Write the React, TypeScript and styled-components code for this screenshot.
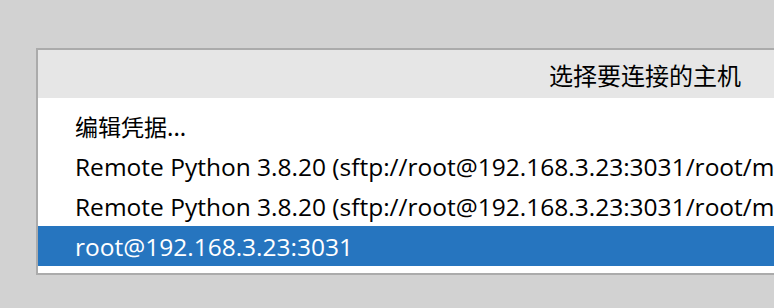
import React from 'react'
import styled, { createGlobalStyle } from 'styled-components'

const GlobalStyle = createGlobalStyle`
  html, body {
    margin: 0;
    padding: 0;
    background: #d2d2d2;
    overflow: hidden;
  }
  body {
    font-family: "Open Sans", "Noto Sans CJK SC", sans-serif;
  }
`

const Page = styled.main`
  width: 774px;
  height: 308px;
  padding: 48px 0 0 36px;
  box-sizing: border-box;
  overflow: hidden;
`

const Panel = styled.section`
  width: 1218px;
  border: 2px solid #ababab;
  background: #ffffff;
  box-sizing: border-box;
`

const Header = styled.header`
  height: 48px;
  background: #e6e6e6;
  display: flex;
  align-items: center;
  justify-content: center;
  font-family: "Noto Sans CJK SC", sans-serif;
  font-size: 24px;
  color: #000;
`

const List = styled.ul`
  list-style: none;
  margin: 0;
  padding: 8px 0 7px;
`

const Item = styled.li<{ $selected?: boolean }>`
  height: 40px;
  display: flex;
  align-items: center;
  padding-left: 37px;
  white-space: nowrap;
  font-size: 24.5px;
  color: ${p => (p.$selected ? '#ffffff' : '#000000')};
  background: ${p => (p.$selected ? '#2675bf' : 'transparent')};
`

const CjkText = styled.span`
  font-family: "Noto Sans CJK SC", sans-serif;
  font-size: 23px;
`

const hosts: Array<string> = [
  'Remote Python 3.8.20 (sftp://root@192.168.3.23:3031/root/miniconda3/bin/python)',
  'Remote Python 3.8.20 (sftp://root@192.168.3.23:3031/root/miniconda3/envs/py38/bin/python)',
  'root@192.168.3.23:3031',
]

const App = () => {
  return (
    <Page>
      <GlobalStyle />
      <Panel>
        <Header>选择要连接的主机</Header>
        <List>
          <Item>
            <CjkText>编辑凭据...</CjkText>
          </Item>
          {hosts.map((h, i) => (
            <Item key={i} $selected={i === hosts.length - 1}>
              {h}
            </Item>
          ))}
        </List>
      </Panel>
    </Page>
  )
}

export default App
